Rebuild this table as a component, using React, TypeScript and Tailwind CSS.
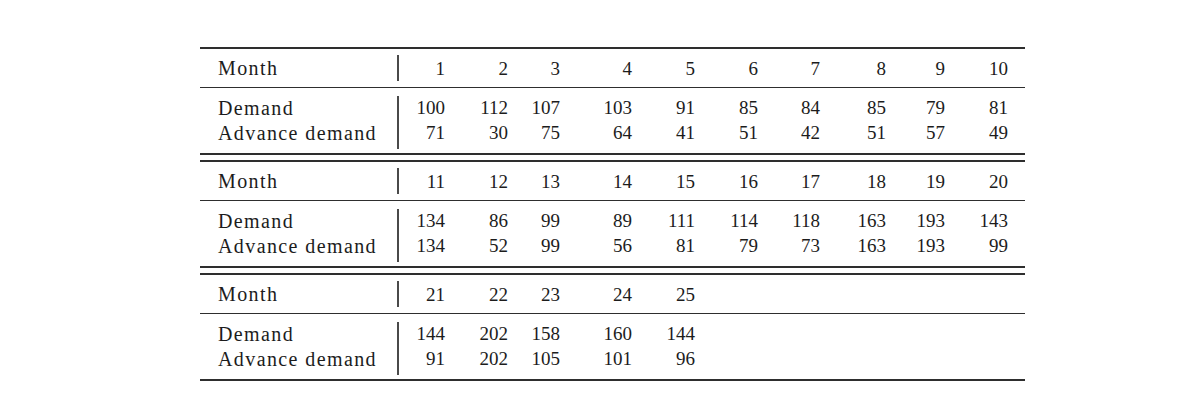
import React from "react";

const blocks = [
  {
    months: ["1", "2", "3", "4", "5", "6", "7", "8", "9", "10"],
    demand: ["100", "112", "107", "103", "91", "85", "84", "85", "79", "81"],
    advance: ["71", "30", "75", "64", "41", "51", "42", "51", "57", "49"],
  },
  {
    months: ["11", "12", "13", "14", "15", "16", "17", "18", "19", "20"],
    demand: ["134", "86", "99", "89", "111", "114", "118", "163", "193", "143"],
    advance: ["134", "52", "99", "56", "81", "79", "73", "163", "193", "99"],
  },
  {
    months: ["21", "22", "23", "24", "25"],
    demand: ["144", "202", "158", "160", "144"],
    advance: ["91", "202", "105", "101", "96"],
  },
];

const cols = "grid grid-cols-[46px_63px_52px_72px_63px_63px_62px_66px_59px_63px]";

const NumRow = ({ values }: { values: string[] }) => (
  <div className={`${cols} h-[25px] items-center`}>
    {values.map((v, i) => (
      <span key={i} className="text-right">
        {v}
      </span>
    ))}
  </div>
);

const Block = ({ months, demand, advance }: (typeof blocks)[number]) => (
  <div>
    <div className="h-[2px] bg-[#2e2e2e]" />
    {/* header row */}
    <div className="flex h-[38px]">
      <div className="w-[197px] pl-[18px] flex items-center tracking-[0.07em] text-[20px]">Month</div>
      <div className="w-[2px] my-[6px] bg-[#4a4a4a]" />
      <div className="flex items-center text-[19px]">
        <NumRow values={months} />
      </div>
    </div>
    <div className="h-[1px] bg-[#2e2e2e]" />
    {/* data rows */}
    <div className="flex h-[65px] pt-[7px] pb-[8px]">
      <div className="w-[197px] pl-[18px] flex flex-col tracking-[0.07em] text-[20px]">
        <div className="h-[25px] flex items-center">Demand</div>
        <div className="h-[25px] flex items-center">Advance demand</div>
      </div>
      <div className="w-[2px] mt-[1px] mb-[-4px] bg-[#4a4a4a]" />
      <div className="flex flex-col text-[19px]">
        <NumRow values={demand} />
        <NumRow values={advance} />
      </div>
    </div>
    <div className="h-[2px] bg-[#2e2e2e]" />
  </div>
);

export default function App() {
  return (
    <div className="w-[1201px] h-[408px] bg-white overflow-hidden">
      <div
        className="ml-[200px] mt-[47px] w-[825px] flex flex-col gap-[5px] text-[#1c1c1c] leading-none"
        style={{ fontFamily: '"Liberation Serif", serif' }}
      >
        {blocks.map((b, i) => (
          <Block key={i} {...b} />
        ))}
      </div>
    </div>
  );
}
